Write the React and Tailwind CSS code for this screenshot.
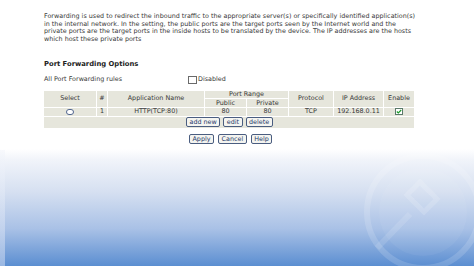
export default function App() {
  const cell = "bg-[#e6e6dc] border-[1.5px] border-white text-center align-middle p-0 leading-[7px]";
  const btn =
    "h-[10px] px-[2.5px] leading-[8px] border border-[#4a5d80] rounded-[2px] bg-[#f4f4f0] text-[#1f3a6a] text-[6.4px]";

  return (
    <div className="relative w-[474px] h-[266px] overflow-hidden bg-[linear-gradient(to_bottom,#ffffff_0%,#ffffff_56%,#f1f4fa_60%,#d6e0f1_72%,#a9c1e6_86%,#5b8ed1_100%)] font-['DejaVu_Sans',sans-serif] text-[#383838]">
      <div className="absolute left-0 top-[150px] w-[5px] h-[116px] bg-[linear-gradient(to_bottom,#f4f6fb,#c3d3ee)] opacity-60" />
      <svg className="absolute left-[325px] top-[150px]" width="149" height="116" viewBox="0 0 149 116">
        <circle cx="98" cy="62" r="56" fill="none" stroke="#ffffff" strokeOpacity="0.15" strokeWidth="6" />
        <circle cx="98" cy="62" r="44" fill="#ffffff" fillOpacity="0.05" />
        <path d="M82 45 L95 32 L112 49 L99 62 Z" fill="none" stroke="#ffffff" strokeOpacity="0.15" strokeWidth="5" />
        <path d="M85 64 L52 98" stroke="#ffffff" strokeOpacity="0.12" strokeWidth="6" />
      </svg>

      <div className="relative pl-[44px] pt-[13px]">
        <p className="text-[6.4px] leading-[7.7px] whitespace-nowrap">
          Forwarding is used to redirect the inbound traffic to the appropriate server(s) or specifically identified application(s)
          <br />
          in the internal network. In the setting, the public ports are the target ports seen by the Internet world and the
          <br />
          private ports are the target ports in the inside hosts to be translated by the device. The IP addresses are the hosts
          <br />
          which host these private ports
        </p>

        <div className="mt-[16px] text-[6.8px] leading-[8px] font-bold text-[#222]">Port Forwarding Options</div>

        <div className="mt-[7px] flex items-center text-[6.4px] h-[10px]">
          <span className="w-[144px]">All Port Forwarding rules</span>
          <span className="w-[9px] h-[8px] border border-[#6a6a6a] bg-white mr-[1px]" />
          <span>Disabled</span>
        </div>

        <table className="mt-[5px] border-collapse text-[6.4px] w-[372px] -ml-[1px] table-fixed">
          <thead>
            <tr className="h-[8.5px]">
              <td rowSpan={2} className={`${cell} w-[53px]`}>Select</td>
              <td rowSpan={2} className={`${cell} w-[11px]`}>#</td>
              <td rowSpan={2} className={`${cell} w-[97px]`}>Application Name</td>
              <td colSpan={2} className={cell}>Port Range</td>
              <td rowSpan={2} className={`${cell} w-[45px]`}>Protocol</td>
              <td rowSpan={2} className={`${cell} w-[50px]`}>IP Address</td>
              <td rowSpan={2} className={`${cell} w-[31px]`}>Enable</td>
            </tr>
            <tr className="h-[8.5px]">
              <td className={`${cell} w-[45px]`}>Public</td>
              <td className={`${cell} w-[40px]`}>Private</td>
            </tr>
          </thead>
          <tbody>
            <tr className="h-[9px]">
              <td className={cell}>
                <span className="inline-block w-[8px] h-[6px] rounded-full border border-[#51668f] bg-white align-middle" />
              </td>
              <td className={cell}>1</td>
              <td className={cell}>HTTP(TCP:80)</td>
              <td className={cell}>80</td>
              <td className={cell}>80</td>
              <td className={cell}>TCP</td>
              <td className={cell}>192.168.0.11</td>
              <td className={cell}>
                <span className="inline-flex w-[8px] h-[7px] border border-[#5b7a6a] bg-white align-middle items-center justify-center">
                  <svg width="6" height="5" viewBox="0 0 6 5">
                    <path d="M0.8 2.5 L2.3 3.9 L5.2 1" fill="none" stroke="#1a9a2a" strokeWidth="1.2" />
                  </svg>
                </span>
              </td>
            </tr>
            <tr className="h-[12px]">
              <td colSpan={8} className="bg-[#e6e6dc] border-[1.5px] border-white p-0">
                <div className="flex gap-[3px] pl-[142px]">
                  <button className={btn}>add new</button>
                  <button className={btn}>edit</button>
                  <button className={btn}>delete</button>
                </div>
              </td>
            </tr>
          </tbody>
        </table>

        <div className="mt-[5px] flex gap-[4px] pl-[145px]">
          <button className={btn}>Apply</button>
          <button className={btn}>Cancel</button>
          <button className={btn}>Help</button>
        </div>
      </div>
    </div>
  );
}
